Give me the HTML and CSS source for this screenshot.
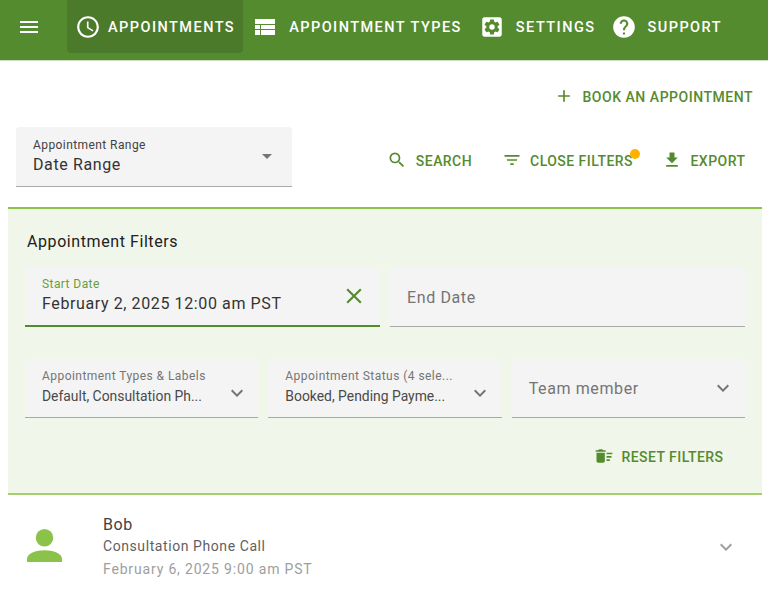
FILE: index.html
```html
<!DOCTYPE html>
<html lang="en">
<head>
<meta charset="utf-8">
<title>Appointments</title>
<link rel="stylesheet" href="styles.css">
</head>
<body>
<header class="topbar">
  <button class="menu-btn" aria-label="Menu"><svg class="ic-24" viewBox="0 0 24 24"><path fill="#fff" d="M3 18h18v-2H3zm0-5h18v-2H3zm0-7v2h18V6z"/></svg></button>
  <nav class="nav">
    <a class="nav-item active"><svg class="ic-nav gap-7" viewBox="0 0 24 24"><path fill="#fff" d="M11.99 2C6.47 2 2 6.48 2 12s4.47 10 9.99 10C17.52 22 22 17.52 22 12S17.52 2 11.99 2zM12 20c-4.42 0-8-3.58-8-8s3.58-8 8-8 8 3.58 8 8-3.58 8-8 8zm.5-13H11v6l5.25 3.15.75-1.23-4.5-2.67z"/></svg><span class="nav-text">APPOINTMENTS</span></a>
    <a class="nav-item"><svg class="ic-24 gap-12" viewBox="0 0 24 24"><path fill="#fff" d="M2 4h20v5H2zM2 10h5v4H2zM8 10h14v4H8zM2 15h5v5H2zM8 15h14v5H8z"/></svg><span class="nav-text">APPOINTMENT TYPES</span></a>
    <a class="nav-item"><svg class="ic-nav gear" viewBox="0 0 24 24"><path fill="#fff" fill-rule="evenodd" d="M19 3H5c-1.11 0-2 .9-2 2v14c0 1.1.89 2 2 2h14c1.1 0 2-.9 2-2V5c0-1.1-.9-2-2-2zm-1.75 9c0 .23-.02.46-.05.68l1.48 1.16c.13.11.17.3.08.45l-1.4 2.42c-.09.15-.27.21-.43.15l-1.74-.7c-.36.28-.76.51-1.18.69l-.26 1.85c-.03.17-.18.3-.35.3h-2.8c-.17 0-.32-.13-.35-.29l-.26-1.85c-.43-.18-.82-.41-1.18-.69l-1.74.7c-.16.06-.34 0-.43-.15l-1.4-2.42c-.09-.15-.05-.34.08-.45l1.48-1.16c-.03-.23-.05-.46-.05-.69 0-.23.02-.46.05-.68l-1.48-1.16c-.13-.11-.17-.3-.08-.45l1.4-2.42c.09-.15.27-.21.43-.15l1.74.7c.36-.28.76-.51 1.18-.69l.26-1.85c.03-.17.18-.3.35-.3h2.8c.17 0 .32.13.35.29l.26 1.85c.43.18.82.41 1.18.69l1.74-.7c.16-.06.34 0 .43.15l1.4 2.42c.09.15.05.34-.08.45l-1.48 1.16c.03.23.05.46.05.69zM12 9.5a2.5 2.5 0 1 0 0 5 2.5 2.5 0 0 0 0-5z"/></svg><span class="nav-text">SETTINGS</span></a>
    <a class="nav-item"><svg class="ic-nav gap-10" viewBox="0 0 24 24"><path fill="#fff" d="M12 2C6.48 2 2 6.48 2 12s4.48 10 10 10 10-4.48 10-10S17.52 2 12 2zm1 17h-2v-2h2v2zm2.07-7.75-.9.92C13.45 12.9 13 13.5 13 15h-2v-.5c0-1.1.45-2.1 1.17-2.83l1.24-1.26c.37-.36.59-.86.59-1.41 0-1.1-.9-2-2-2s-2 .9-2 2H8c0-2.21 1.79-4 4-4s4 1.79 4 4c0 .88-.36 1.68-.93 2.25z"/></svg><span class="nav-text">SUPPORT</span></a>
  </nav>
</header>

<main>
  <div class="book-row">
    <a class="action book"><svg class="ic-20" viewBox="0 0 24 24"><path fill="#558b2f" d="M19 13h-6v6h-2v-6H5v-2h6V5h2v6h6z"/></svg><span>BOOK AN APPOINTMENT</span></a>
  </div>

  <div class="tools-row">
    <div class="field range">
      <div class="field-text stack-mid">
        <div class="label-sm dark">Appointment Range</div>
        <div class="value-lg">Date Range</div>
      </div>
      <svg class="caret" viewBox="0 0 10 5"><path fill="#757575" d="M0 0h10L5 5z"/></svg>
    </div>
    <div class="tools">
      <a class="action search"><svg class="ic-20" viewBox="0 0 24 24"><path fill="#558b2f" d="M15.5 14h-.79l-.28-.27A6.47 6.47 0 0 0 16 9.5 6.5 6.5 0 1 0 9.5 16c1.61 0 3.09-.59 4.23-1.57l.27.28v.79l5 4.99L20.49 19l-4.99-5zm-6 0C7.01 14 5 11.99 5 9.5S7.01 5 9.5 5 14 7.01 14 9.5 11.99 14 9.5 14z"/></svg><span>SEARCH</span></a>
      <a class="action filters"><svg class="ic-20" viewBox="0 0 24 24"><path fill="#558b2f" d="M10 18h4v-2h-4v2zM3 6v2h18V6H3zm3 7h12v-2H6v2z"/></svg><span class="badged">CLOSE FILTERS<i class="dot"></i></span></a>
      <a class="action"><svg class="ic-20" viewBox="0 0 24 24"><path fill="#558b2f" d="M19 9h-4V3H9v6H5l7 7 7-7zM5 18v2h14v-2H5z"/></svg><span>EXPORT</span></a>
    </div>
  </div>

  <section class="panel">
    <h2 class="panel-title">Appointment Filters</h2>
    <div class="dates">
      <div class="field focused">
        <div class="field-text stack-up">
          <div class="label-sm green">Start Date</div>
          <div class="value-lg">February 2, 2025 12:00 am PST</div>
        </div>
        <svg class="clear" viewBox="0 0 24 24"><path fill="#558b2f" d="M19 6.41 17.59 5 12 10.59 6.41 5 5 6.41 10.59 12 5 17.59 6.41 19 12 13.41 17.59 19 19 17.59 13.41 12z"/></svg>
      </div>
      <div class="field">
        <div class="placeholder end">End Date</div>
      </div>
    </div>
    <div class="selects">
      <div class="field sel">
        <div class="field-text narrow">
          <div class="label-xs">Appointment Types &amp; Labels</div>
          <div class="value-sm">Default, Consultation Ph...</div>
        </div>
        <svg class="chev low" viewBox="0 0 24 24"><path fill="#757575" d="M16.59 8.59 12 13.17 7.41 8.59 6 10l6 6 6-6z"/></svg>
      </div>
      <div class="field sel">
        <div class="field-text narrow">
          <div class="label-xs">Appointment Status (4 sele...</div>
          <div class="value-sm">Booked, Pending Payme...</div>
        </div>
        <svg class="chev low" viewBox="0 0 24 24"><path fill="#757575" d="M16.59 8.59 12 13.17 7.41 8.59 6 10l6 6 6-6z"/></svg>
      </div>
      <div class="field sel">
        <div class="placeholder">Team member</div>
        <svg class="chev" viewBox="0 0 24 24"><path fill="#757575" d="M16.59 8.59 12 13.17 7.41 8.59 6 10l6 6 6-6z"/></svg>
      </div>
    </div>
    <div class="reset-row">
      <a class="action reset"><svg class="ic-20" viewBox="0 0 24 24"><path fill="#558b2f" d="M15 16h4v2h-4zm0-8h7v2h-7zm0 4h6v2h-6zM3 18c0 1.1.9 2 2 2h6c1.1 0 2-.9 2-2V8H3v10zM14 5h-3l-1-1H6L5 5H2v2h12z"/></svg><span>RESET FILTERS</span></a>
    </div>
  </section>

  <article class="appt">
    <svg class="avatar" viewBox="0 0 36 36"><circle cx="18" cy="10" r="9" fill="#8bc34a"/><path fill="#8bc34a" d="M0 35v-3c0-6 9-9 18-9s18 3 18 9v3z"/></svg>
    <div class="appt-text">
      <div class="appt-name">Bob</div>
      <div class="appt-type">Consultation Phone Call</div>
      <div class="appt-date">February 6, 2025 9:00 am PST</div>
    </div>
    <svg class="chev appt-chev" viewBox="0 0 24 24"><path fill="#9e9e9e" d="M16.59 8.59 12 13.17 7.41 8.59 6 10l6 6 6-6z"/></svg>
  </article>
</main>
</body>
</html>
```
FILE: styles.css
```css
* { box-sizing: border-box; }
html, body { margin: 0; padding: 0; height: 100%; overflow: hidden; }
body { font-family: Roboto, "Liberation Sans", sans-serif; background: #fff; color: #212121; }

.topbar { height: 61px; background: #558b2f; border-bottom: 1px solid #cfdcc4; display: flex; align-items: flex-start; }
.menu-btn { width: 67px; height: 53px; padding: 0 0 0 17px; margin: 0; border: 0; background: none; display: flex; align-items: center; }
.ic-24 { width: 24px; height: 24px; display: block; flex: none; }
.nav { display: flex; }
.nav-item { height: 53px; display: flex; align-items: center; padding: 0 8px; color: #fff; font-size: 14.5px; font-weight: 500; letter-spacing: 1.46px; border-radius: 0 0 4px 4px; white-space: nowrap; }
.nav-item.active { background: #4c7a2b; margin-right: 2px; }
.nav-text { padding-top: 2px; }
.ic-nav { width: 26px; height: 26px; display: block; flex: none; }
.gap-7 { margin-right: 7px; }
.gap-12 { margin-right: 12px; }
.gap-10 { margin-right: 10px; }
.gear { margin: 0 11px 0 1px; }

.book-row { height: 66px; display: flex; justify-content: flex-end; align-items: flex-start; padding: 27px 15px 0 0; }
.action { display: flex; align-items: center; gap: 8.5px; color: #558b2f; font-size: 14px; font-weight: 500; letter-spacing: .45px; white-space: nowrap; }
.book { letter-spacing: .52px; }
.ic-20 { width: 20px; height: 20px; display: block; flex: none; margin-top: -2px; }

.tools-row { height: 80px; display: flex; padding-left: 16px; align-items: flex-start; justify-content: space-between; }
.field { background: #f4f4f4; border-bottom: 1px solid #a8a8a8; border-radius: 4px 4px 0 0; display: flex; align-items: center; }
.range { width: 276px; height: 60px; padding: 0 16px 0 17px; justify-content: space-between; }
.field-text { min-width: 0; }
.stack-mid { padding-bottom: 1.5px; }
.stack-mid .value-lg { margin-top: 1.5px; }
.stack-up { padding-bottom: 3px; }
.stack-up .value-lg { margin-top: 1px; }
.label-sm { font-size: 12px; line-height: 16px; letter-spacing: .42px; }
.dark { color: #424242; }
.green { color: #689f38; }
.value-lg { font-size: 16px; line-height: 21px; letter-spacing: .61px; color: #333; white-space: nowrap; }
.caret { width: 10px; height: 5px; display: block; margin-right: 4px; margin-top: -1px; }

.tools { display: flex; padding: 25px 0 0 0; margin-right: 22.6px; }
.search { margin-right: 29.5px; }
.filters { margin-right: 29px; }
.badged { position: relative; }
.dot { position: absolute; right: -7px; top: -4px; width: 10px; height: 10px; background: #ffb300; border-radius: 50%; }

.panel { margin: 0 6px 0 8px; height: 288px; background: #f0f6e9; border-top: 2px solid #8bc34a; border-bottom: 2px solid #a5d06e; padding: 0 17px; }
.panel-title { margin: 0; padding: 22px 0 0 2px; height: 58px; font-size: 16px; line-height: 22px; font-weight: 400; letter-spacing: .58px; color: #212121; }
.dates { display: grid; grid-template-columns: 355px 355px; column-gap: 10px; }
.dates .field { height: 60px; padding: 0 17px; justify-content: space-between; }
.focused { border-bottom: 2px solid #558b2f !important; }
.clear { width: 26px; height: 26px; display: block; flex: none; margin-right: -4px; }
.placeholder { font-size: 16px; letter-spacing: .62px; color: #757575; }
.end { padding-top: 2px; }
.selects { margin-top: 32px; display: grid; grid-template-columns: repeat(3, 1fr); column-gap: 10px; }
.sel { height: 59px; padding: 0 9px 0 17px; justify-content: space-between; }
.sel + .sel { padding-right: 10px; }
.narrow { width: 170px; padding-bottom: 4px; }
.label-xs { font-size: 12px; line-height: 18px; letter-spacing: .45px; color: #757575; white-space: nowrap; }
.value-sm { font-size: 13.9px; line-height: 19px; margin-top: 2px; color: #4a4a4a; white-space: nowrap; }
.chev { width: 24px; height: 24px; display: block; flex: none; }
.low { margin-top: 10px; }
.reset-row { display: flex; justify-content: flex-end; padding: 30px 21.5px 0 0; }
.reset { gap: 7.5px; }

.appt { height: 94px; display: flex; padding-left: 27px; }
.avatar { width: 35px; height: 35px; display: block; margin-top: 33px; flex: none; }
.appt-text { margin-left: 41px; padding-top: 19px; flex: 1; }
.appt-name { font-size: 16px; line-height: 21px; letter-spacing: .6px; color: #424242; }
.appt-type { font-size: 14px; line-height: 22px; letter-spacing: .58px; color: #5f5f5f; }
.appt-date { font-size: 14px; line-height: 22px; letter-spacing: .83px; color: #9e9e9e; margin-top: 1px; }
.appt-chev { margin: 40px 30px 0 0; }
```
